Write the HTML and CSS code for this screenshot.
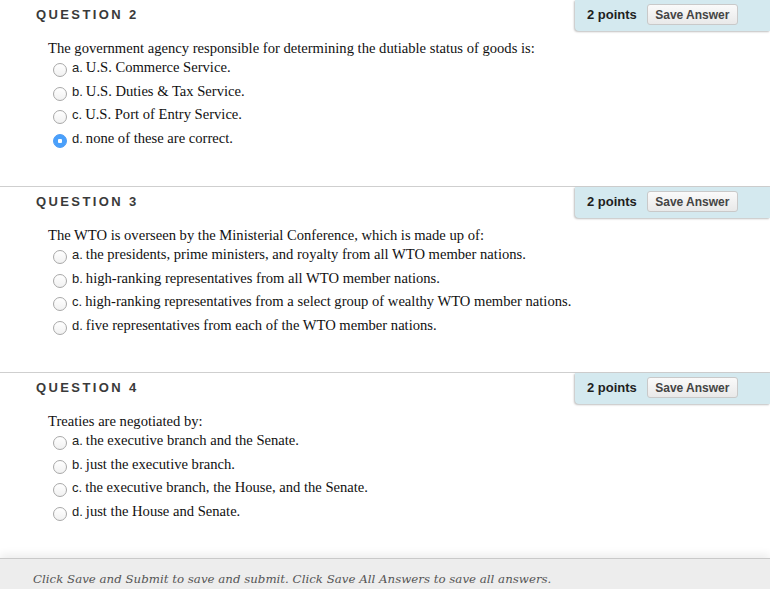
FILE: index.html
```html
<!DOCTYPE html>
<html lang="en">
<head>
    <meta charset="UTF-8">
    <title>Questions</title>
    <link rel="stylesheet" href="styles.css">
</head>
<body>
<div class="questions">

    <div class="question">
        <div class="qHead">
            <h3>QUESTION 2</h3>
            <div class="points">
                <span>2 points</span>
                <button class="saveBtn">Save Answer</button>
            </div>
        </div>
        <div class="qBody">
            <p class="qText">The government agency responsible for determining the dutiable status of goods is:</p>
            <ul class="options">
                <li><span class="radio"></span><span class="letter">a.</span>U.S. Commerce Service.</li>
                <li><span class="radio"></span><span class="letter">b.</span>U.S. Duties &amp; Tax Service.</li>
                <li><span class="radio"></span><span class="letter">c.</span>U.S. Port of Entry Service.</li>
                <li><span class="radio checked"></span><span class="letter">d.</span>none of these are correct.</li>
            </ul>
        </div>
    </div>

    <div class="question">
        <div class="qHead">
            <h3>QUESTION 3</h3>
            <div class="points">
                <span>2 points</span>
                <button class="saveBtn">Save Answer</button>
            </div>
        </div>
        <div class="qBody">
            <p class="qText">The WTO is overseen by the Ministerial Conference, which is made up of:</p>
            <ul class="options">
                <li><span class="radio"></span><span class="letter">a.</span>the presidents, prime ministers, and royalty from all WTO member nations.</li>
                <li><span class="radio"></span><span class="letter">b.</span>high-ranking representatives from all WTO member nations.</li>
                <li><span class="radio"></span><span class="letter">c.</span>high-ranking representatives from a select group of wealthy WTO member nations.</li>
                <li><span class="radio"></span><span class="letter">d.</span>five representatives from each of the WTO member nations.</li>
            </ul>
        </div>
    </div>

    <div class="question">
        <div class="qHead">
            <h3>QUESTION 4</h3>
            <div class="points">
                <span>2 points</span>
                <button class="saveBtn">Save Answer</button>
            </div>
        </div>
        <div class="qBody">
            <p class="qText">Treaties are negotiated by:</p>
            <ul class="options">
                <li><span class="radio"></span><span class="letter">a.</span>the executive branch and the Senate.</li>
                <li><span class="radio"></span><span class="letter">b.</span>just the executive branch.</li>
                <li><span class="radio"></span><span class="letter">c.</span>the executive branch, the House, and the Senate.</li>
                <li><span class="radio"></span><span class="letter">d.</span>just the House and Senate.</li>
            </ul>
        </div>
    </div>

</div>

<div class="footer">
    <p>Click Save and Submit to save and submit. Click Save All Answers to save all answers.</p>
</div>
</body>
</html>
```

FILE: styles.css
```css
*{
    margin: 0;
    padding: 0;
    box-sizing: border-box;
}
body{
    background-color: #fff;
    color: #111;
    font-family: "Liberation Serif", serif;
    overflow: hidden;
}
.question{
    height: 186px;
}
.question + .question{
    border-top: 1px solid #cfcfcf;
}
.qHead{
    display: flex;
    justify-content: space-between;
    align-items: flex-start;
}
.qHead h3{
    font-family: "Liberation Sans", Arial, sans-serif;
    font-size: 13px;
    font-weight: bold;
    letter-spacing: 2.4px;
    color: #3a3a3a;
    padding: 7px 0 0 36px;
}
.points{
    display: flex;
    align-items: center;
    gap: 10px;
    width: 195px;
    height: 31px;
    padding: 0 0 2px 12px;
    background-color: #d4e9ef;
    border-bottom-left-radius: 4px;
    box-shadow: -1px 1px 2px rgba(0, 0, 0, 0.25);
    font-family: "Liberation Sans", Arial, sans-serif;
    font-size: 13px;
    font-weight: bold;
    color: #1e1e1e;
}
.saveBtn{
    width: 91px;
    height: 21px;
    border: 1px solid #c9c9c9;
    border-radius: 3px;
    background: linear-gradient(#fafafa, #e9e9e9);
    font-family: "Liberation Sans", Arial, sans-serif;
    font-size: 12px;
    font-weight: bold;
    color: #444;
}
.qBody{
    padding: 8px 0 0 48px;
}
.qText{
    font-size: 14.6px;
    line-height: 18px;
}
.options{
    list-style: none;
    margin-left: 5px;
    margin-top: -1px;
}
.options li{
    display: flex;
    align-items: center;
    height: 23.5px;
    font-size: 14.6px;
}
.radio{
    width: 14px;
    height: 14px;
    border: 1px solid #a8a8a8;
    border-radius: 50%;
    background: linear-gradient(#fff, #f1f1f1);
    margin: 5px 5px 0 0;
    flex-shrink: 0;
}
.radio.checked{
    border-color: #4a9af5;
    background: radial-gradient(circle, #fff 0 2px, #4aa0fb 2.5px);
}
.letter{
    font-family: "Liberation Sans", Arial, sans-serif;
    font-size: 13px;
    color: #222;
    margin-right: 3px;
}
.footer{
    background-color: #ededed;
    border-top: 1px solid #c9c9c9;
    box-shadow: 0 -4px 8px rgba(0, 0, 0, 0.07);
    height: 40px;
    padding: 13px 0 0 33px;
}
.footer p{
    font-family: "DejaVu Serif", Georgia, serif;
    font-style: italic;
    font-size: 11.8px;
    color: #555;
}
```
